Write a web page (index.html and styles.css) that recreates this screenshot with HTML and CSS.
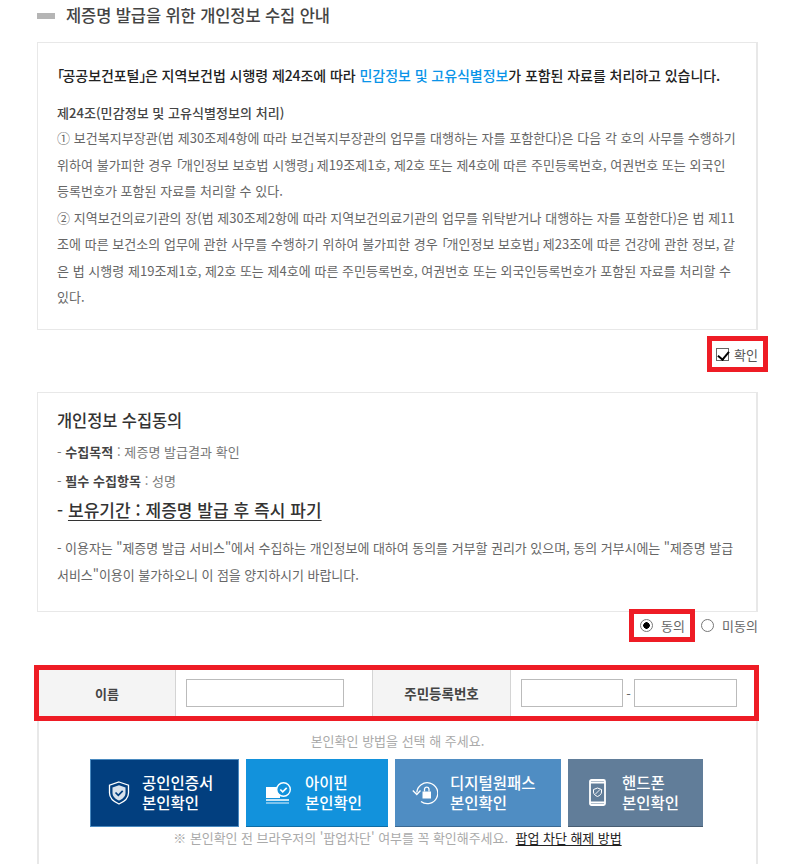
FILE: index.html
```html
<!DOCTYPE html>
<html lang="ko">
<head>
<meta charset="utf-8">
<title>제증명 발급을 위한 개인정보 수집 안내</title>
<link rel="stylesheet" href="styles.css">
</head>
<body>
<main class="page">
  <h2 class="title"><span class="title-bar"></span>제증명 발급을 위한 개인정보 수집 안내</h2>

  <section class="box notice">
    <p class="lead"><span class="pb">「</span>공공보건포털<span class="pb">」</span>은 지역보건법 시행령 제24조에 따라 <span class="blue">민감정보 및 고유식별정보</span>가 포함된 자료를 처리하고 있습니다.</p>
    <p class="sub">제24조(민감정보 및 고유식별정보의 처리)</p>
    <p class="body">① 보건복지부장관(법 제30조제4항에 따라 보건복지부장관의 업무를 대행하는 자를 포함한다)은 다음 각 호의 사무를 수행하기<br>위하여 불가피한 경우 <span class="pb">「</span>개인정보 보호법 시행령<span class="pb">」</span> 제19조제1호, 제2호 또는 제4호에 따른 주민등록번호, 여권번호 또는 외국인<br>등록번호가 포함된 자료를 처리할 수 있다.<br>② 지역보건의료기관의 장(법 제30조제2항에 따라 지역보건의료기관의 업무를 위탁받거나 대행하는 자를 포함한다)은 법 제11<br>조에 따른 보건소의 업무에 관한 사무를 수행하기 위하여 불가피한 경우 <span class="pb">「</span>개인정보 보호법<span class="pb">」</span> 제23조에 따른 건강에 관한 정보, 같<br>은 법 시행령 제19조제1호, 제2호 또는 제4호에 따른 주민등록번호, 여권번호 또는 외국인등록번호가 포함된 자료를 처리할 수<br>있다.</p>
  </section>

  <div class="row-check">
    <label class="red check-wrap"><input type="checkbox" class="chk" checked>확인</label>
  </div>

  <section class="box consent">
    <h3 class="consent-title">개인정보 수집동의</h3>
    <p class="item">- <b>수집목적</b> : 제증명 발급결과 확인</p>
    <p class="item">- <b>필수 수집항목</b> : 성명</p>
    <p class="period">- <span>보유기간 : 제증명 발급 후 즉시 파기</span></p>
    <p class="body warn">- 이용자는 "제증명 발급 서비스"에서 수집하는 개인정보에 대하여 동의를 거부할 권리가 있으며, 동의 거부시에는 "제증명 발급<br>서비스"이용이 불가하오니 이 점을 양지하시기 바랍니다.</p>
  </section>

  <div class="row-radio">
    <label class="red radio-wrap"><input type="radio" name="agree" class="rad" checked>동의</label>
    <label class="radio-plain"><input type="radio" name="agree" class="rad">미동의</label>
  </div>

  <div class="red form-row">
    <div class="cell head name-head">이름</div>
    <div class="cell name-cell"><input type="text" class="inp inp-name"></div>
    <div class="cell head id-head">주민등록번호</div>
    <div class="cell id-cell"><input type="text" class="inp inp-id"><span class="dash">-</span><input type="text" class="inp inp-id2"></div>
  </div>

  <section class="auth">
    <p class="auth-hint">본인확인 방법을 선택 해 주세요.</p>
    <div class="auth-btns">
      <a class="btn btn-cert">
        <svg class="ico" width="22" height="24" viewBox="0 0 22 24" fill="none" stroke="#fff"><path d="M11 1 20.500 4.200v7.800c0 5.500-4.500 8.800-9.500 11-5-2.200-9.500-5.500-9.500-11V4.200z" stroke-width="1.300"/><path d="M11 4.200 17.500 6.400v5.600c0 3.700-3 6-6.500 7.600-3.500-1.600-6.500-3.900-6.500-7.600V6.400z" fill="#fff" fill-opacity=".85" stroke="none"/><path d="m7.500 11.500 2.800 2.800 4.400-4.400" stroke="#023f7f" stroke-width="1.700"/></svg>
        <span class="btn-text">공인인증서<br>본인확인</span>
      </a>
      <a class="btn btn-ipin">
        <svg class="ico" width="25" height="22" viewBox="0 0 25 22" fill="none"><path d="M0 5h14v11H0z" fill="#fff"/><circle cx="17.500" cy="7.500" r="6.800" fill="#1292dc" stroke="#fff" stroke-width="1.400"/><path d="m14.300 7.500 2.400 2.400 4-4" stroke="#fff" stroke-width="1.700"/><path d="M0 18h23" stroke="#fff" stroke-width="1.500"/><path d="M0 21h23" stroke="#fff" stroke-width=".9"/></svg>
        <span class="btn-text">아이핀<br>본인확인</span>
      </a>
      <a class="btn btn-one">
        <svg class="ico" width="26" height="24" viewBox="0 0 26 24" fill="none" stroke="#fff"><path d="M4.800 11.500A10.500 10.500 0 1 1 9 20.600" stroke-width="1.300"/><path d="m.8 9.500 4 4 3.700-4" stroke-width="1.300"/><path d="M10.500 10.500h8.500v7h-8.500z" fill="#fff" stroke="none"/><path d="M12.500 10.500V8a2.300 2.300 0 0 1 4.500 0v2.500" stroke-width="1.300"/></svg>
        <span class="btn-text">디지털원패스<br>본인확인</span>
      </a>
      <a class="btn btn-phone">
        <svg class="ico" width="17" height="27" viewBox="0 0 17 27" fill="none" stroke="#fff"><rect x="1" y="1" width="15" height="25" rx="1.500" stroke-width="1.800"/><path d="M1 3.500h15M1 23.500h15" stroke-width="2"/><path d="M8.500 9 12.500 10.500V13c0 2.300-1.700 3.500-4 4.500-2.300-1-4-2.200-4-4.500v-2.500z" stroke-width="1"/><path d="m6 15.500 5-5" stroke-width=".9"/></svg>
        <span class="btn-text">핸드폰<br>본인확인</span>
      </a>
    </div>
    <p class="auth-note">※ 본인확인 전 브라우저의 '팝업차단' 여부를 꼭 확인해주세요. <a class="popup-link">팝업 차단 해제 방법</a></p>
  </section>
</main>
</body>
</html>
```

FILE: styles.css
```css
* { box-sizing: border-box; }
html, body { margin: 0; height: 864px; overflow: hidden; background: #fff; }
body {
  font-family: "Noto Sans CJK KR", "Noto Sans", sans-serif;
  color: #666;
  font-size: 13px;
}
p, h2, h3 { margin: 0; }
.page { width: 800px; padding: 0 42px 0 37px; }

.title {
  display: flex;
  align-items: center;
  height: 30px;
  font-size: 16.500px;
  font-weight: 500;
  color: #444;
  letter-spacing: -0.1px;
}
.title-bar { width: 18px; height: 6px; margin: 2px 11px 0 0; background: #b5b5b5; }

.box { border: 1px solid #e8e8e8; border-right-width: 2px; background: #fff; }
.notice { margin-top: 12px; height: 288px; padding: 21px 18px 0 19px; }
.lead { font-size: 14px; font-weight: 500; color: #222; line-height: 22px; white-space: nowrap; letter-spacing: -0.06px; }
.pb { font-feature-settings: "palt"; letter-spacing: -1.500px; }
.blue { color: #0a94e8; }
.sub { margin-top: 16px; font-size: 13px; font-weight: 500; color: #444; line-height: 22px; letter-spacing: 0.05px; }
.body { font-size: 13px; line-height: 26.500px; color: #666; white-space: nowrap; letter-spacing: 0.03px; }
.notice .body { margin-top: 1px; }

.row-check { display: flex; justify-content: flex-end; margin: 6px -10px 0 0; height: 36px; }
.red { border: 5px solid #ee1c25; }
.check-wrap { display: flex; align-items: center; width: 61px; padding-left: 4px; font-size: 13px; color: #555; }
.chk {
  appearance: none;
  position: relative;
  width: 13px;
  height: 13px;
  margin: 0 5px 0 0;
  border: 1px solid #666;
  background: #fff;
}
.chk:checked::before {
  content: "";
  position: absolute;
  left: 3px;
  top: 0;
  width: 5px;
  height: 9px;
  border: solid #000;
  border-width: 0 2px 2px 0;
  transform: rotate(40deg);
}

.consent { margin-top: 20px; height: 220px; padding: 14px 18px 0 19px; }
.consent-title { margin-bottom: 5px; font-size: 16.500px; font-weight: 500; color: #333; line-height: 26px; letter-spacing: -0.1px; }
.item { line-height: 28.500px; color: #777; font-size: 13px; letter-spacing: 0.05px; }
.item b { font-weight: 700; color: #444; }
.period { font-size: 17px; font-weight: 500; color: #333; line-height: 30px; letter-spacing: 0.05px; }
.period span { text-decoration: underline; text-underline-offset: 3px; }
.body.warn { margin-top: 10px; letter-spacing: -0.045px; }

.row-radio { display: flex; justify-content: flex-end; align-items: center; margin: -3px 0 0; height: 33px; }
.radio-wrap, .radio-plain { display: flex; align-items: center; color: #666; font-size: 13px; }
.radio-wrap { width: 66px; height: 33px; padding-left: 6px; margin-right: 6px; }
.rad {
  appearance: none;
  width: 13px;
  height: 13px;
  margin: 0 8px 0 0;
  border: 1px solid #777;
  border-radius: 50%;
  background: #fff;
}
.rad:checked { background: radial-gradient(circle, #000 0 3px, #fff 3.500px); }

.form-row {
  display: flex;
  margin: 23px -1px 0 -3px;
  height: 56px;
  background: #fff;
}
.cell { display: flex; align-items: center; border-right: 1px solid #d4d4d4; }
.head { justify-content: center; background: #f4f4f4; font-size: 13px; font-weight: 700; color: #444; }
.name-head { width: 137px; }
.name-cell { width: 197px; padding-left: 10px; }
.id-head { width: 138px; font-size: 13.500px; }
.id-cell { flex: 1; padding-left: 10px; border-right: 0; }
.inp { height: 28px; border: 1px solid #bbb; background: #fff; padding: 0; }
.inp-name { width: 158px; }
.inp-id { width: 102px; }
.inp-id2 { width: 103px; height: 28px; border: 1px solid #bbb; background: #fff; padding: 0; }
.dash { width: 11px; text-align: center; color: #666; }

.auth {
  height: 143px;
  border-left: 2px solid #e8e8e8;
  border-right: 2px solid #e8e8e8;
  text-align: center;
}
.auth-hint { padding-top: 11px; line-height: 18px; font-size: 13px; color: #aaa; }
.auth-btns { display: flex; gap: 7px; margin: 9px 0 0 51px; }
.btn {
  display: flex;
  align-items: center;
  height: 68px;
  color: #fff;
  font-size: 15.500px;
  font-weight: 500;
  line-height: 20px;
  text-align: left;
  border-bottom: 1px solid rgba(0, 0, 0, 0.25);
}
.btn-text { margin-top: -2px; }
.ico { flex: none; }
.btn-cert { width: 149px; padding-left: 17px; gap: 12px; background: #023f7f; border: 1px solid #4a8ac0; }
.btn-ipin { width: 142px; padding-left: 20px; gap: 14px; background: #1292dc; }
.btn-one { width: 166px; padding-left: 17px; gap: 12px; background: #4f8dc3; }
.btn-phone { width: 135px; padding-left: 21px; gap: 16px; background: #617d99; }
.auth-note { margin-top: 2px; line-height: 18px; font-size: 13px; color: #aaa; letter-spacing: -0.05px; }
.popup-link { margin-left: 4px; color: #222; text-decoration: underline; text-underline-offset: 2px; }
```
